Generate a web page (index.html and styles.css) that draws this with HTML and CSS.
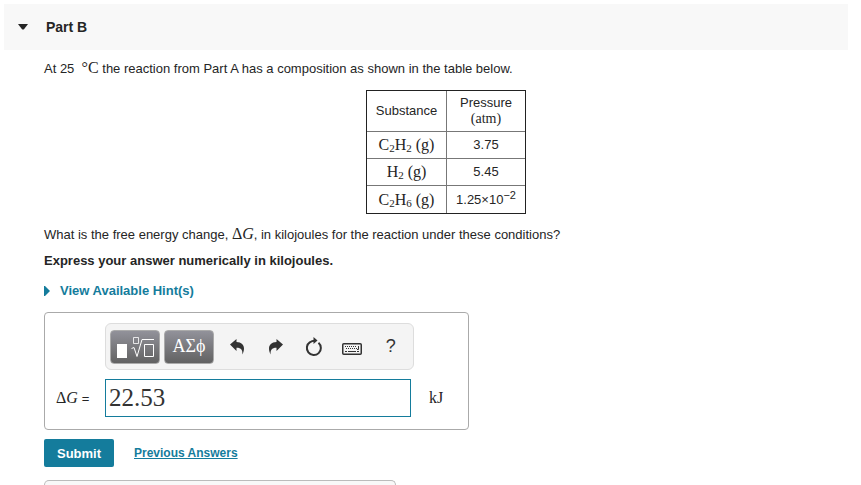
FILE: index.html
```html
<!doctype html>
<html lang="en">
<head>
    <meta charset="UTF-8">
    <meta name="viewport" content="width=device-width, initial-scale=1.0">
    <title>Part B</title>
    <link rel="stylesheet" href="styles.css">
</head>
<body>
<main class="page">
    <header class="part-header">
        <button class="toggle" type="button" aria-label="Collapse Part B">
            <svg width="10" height="6" viewBox="0 0 10 6"><path d="M0 0h10L6 5.2Q5 6 4 5.2z" fill="currentColor"/></svg>
        </button>
        <h1>Part B</h1>
    </header>

    <section class="part-body">
        <p class="intro">At 25 &nbsp;<span class="math">°C</span> the reaction from Part A has a composition as shown in the table below.</p>

        <table class="data-table">
            <thead>
                <tr>
                    <th scope="col">Substance</th>
                    <th scope="col">Pressure<br><span class="unit">(atm)</span></th>
                </tr>
            </thead>
            <tbody>
                <tr>
                    <td class="math">C<sub>2</sub>H<sub>2</sub> (g)</td>
                    <td>3.75</td>
                </tr>
                <tr>
                    <td class="math">H<sub>2</sub> (g)</td>
                    <td>5.45</td>
                </tr>
                <tr>
                    <td class="math">C<sub>2</sub>H<sub>6</sub> (g)</td>
                    <td class="power">1.25×10<sup>−2</sup></td>
                </tr>
            </tbody>
        </table>

        <p class="question">What is the free energy change, <span class="math">Δ<i>G</i></span>, in kilojoules for the reaction under these conditions?</p>
        <p class="instructions">Express your answer numerically in kilojoules.</p>

        <a class="hints" href="#hints">
            <svg width="6" height="10" viewBox="0 0 6 10"><path d="M0 0h1l5 5-5 5H0z" fill="currentColor"/></svg>
            View Available Hint(s)
        </a>

        <form>
            <div class="answer-box">
                <div class="toolbar">
                    <button class="key" type="button" aria-label="Templates">
                        <svg width="38" height="24" viewBox="0 0 38 24" fill="none" stroke="#fff">
                            <path d="M1 9h10v14H1z" fill="#fff" stroke="none"/>
                            <path d="M17.500 2.500h5v6h-5z" stroke-opacity=".8"/>
                            <path d="M15.500 13.500l2.500-1 3 9 5-17h12"/>
                            <path d="M28.500 9.500h9v12h-9z"/>
                        </svg>
                    </button>
                    <button class="key" type="button">ΑΣϕ</button>
                    <div class="tools">
                        <button class="tool" type="button" aria-label="Undo">
                            <svg width="14" height="16" viewBox="0 0 14 16"><path d="M0 5.500L6.500 0v3c5 0 7.500 3 7.500 6.500 0 2-.6 4-1.600 6 .2-4.500-.9-6.800-5.900-6.800V12z" fill="currentColor"/></svg>
                        </button>
                        <button class="tool" type="button" aria-label="Redo">
                            <svg width="14" height="16" viewBox="0 0 14 16"><path d="M14 5.500L7.500 0v3C2.500 3 0 6 0 9.500c0 2 .6 4 1.600 6C1.400 11 2.500 8.700 7.500 8.700V12z" fill="currentColor"/></svg>
                        </button>
                        <button class="tool" type="button" aria-label="Reset">
                            <svg width="18" height="20" viewBox="0 0 18 20"><path d="M13.500 5.800A7 7 0 1 1 5 5.200Q7 3.700 9.500 3.700" fill="none" stroke="currentColor" stroke-width="2"/><path d="M8.500 0l4 3.500-4 3.500z" fill="currentColor"/></svg>
                        </button>
                        <button class="tool" type="button" aria-label="Keyboard">
                            <svg class="keyboard" width="20" height="12" viewBox="0 0 20 12" fill="none" stroke="currentColor">
                                <rect x=".75" y=".75" width="18.500" height="10.500" rx="1" stroke-width="1.500"/>
                                <path d="M3 3.500h12M4 5.500h11" stroke-dasharray="1 1"/>
                                <path d="M3 8.500h2M6 8.500h8M15 8.500h2M16.500 3v3.500H15"/>
                            </svg>
                        </button>
                        <button class="tool help" type="button" aria-label="Help">?</button>
                    </div>
                </div>
                <label class="math" for="answer">Δ<i>G</i> <span class="equals">=</span></label>
                <input id="answer" class="answer" type="text" value="22.53">
                <span class="math">kJ</span>
            </div>
            <div class="actions">
                <button class="submit" type="submit">Submit</button>
                <a class="previous" href="#previous">Previous Answers</a>
            </div>
        </form>

        <div class="feedback"></div>
    </section>
</main>
</body>
</html>
```

FILE: styles.css
```css
body {
    margin: 0;
    background: #fff;
    color: #252525;
    font-family: "Liberation Sans", Arial, sans-serif;
    font-size: 13px;
    line-height: 16px;
}

.page {
    display: flex;
    flex-direction: column;
    box-sizing: border-box;
    min-height: 100vh;
    padding: 4px 13px 0 4px;
}

button {
    padding: 0;
    border: none;
    background: none;
    color: inherit;
    font-family: inherit;
    cursor: pointer;
}

button svg {
    display: block;
}

/* Part header */
.part-header {
    display: flex;
    align-items: center;
    gap: 18px;
    height: 46px;
    padding-left: 14px;
    background: #f8f8f8;
}

h1 {
    margin: 0;
    font-size: 14px;
}

.part-body {
    display: flex;
    flex: 1;
    flex-direction: column;
    padding: 8px 0 0 40px;
}

p {
    margin: 0;
}

.intro,
.question {
    line-height: 20px;
}

.math,
.unit {
    font-family: "Liberation Serif", "Times New Roman", serif;
    font-size: 16px;
}

.unit {
    font-size: 14px;
}

sub,
sup {
    font-size: 11px;
    line-height: 0;
}

sub {
    vertical-align: -2px;
}

sup {
    vertical-align: 5px;
}

/* Pressure table */
.data-table {
    width: 160px;
    margin: 11px auto 10px;
    border: 1px solid #222;
    border-spacing: 0;
    table-layout: fixed;
    text-align: center;
}

.data-table th,
.data-table td {
    padding: 5px 0;
    font-weight: normal;
}

.data-table th {
    padding: 4px 0;
}

.data-table td {
    border-top: 1px solid #777;
}

.data-table th + th,
.data-table td + td {
    border-left: 1px solid #777;
}

.data-table .power {
    padding: 6px 0 5px;
}

.instructions {
    margin-top: 8px;
    font-weight: bold;
}

.hints {
    display: flex;
    align-items: center;
    gap: 10px;
    width: max-content;
    margin: 14px 0 13px;
    color: #147c9c;
    font-weight: bold;
    text-decoration: none;
}

/* Answer entry */
.answer-box {
    display: grid;
    grid-template-columns: 49px 306px 1fr;
    align-items: center;
    row-gap: 9px;
    box-sizing: border-box;
    max-width: 425px;
    padding: 10px 12px 12px 11px;
    border: 1px solid #aaa;
    border-radius: 4px;
}

.toolbar {
    grid-column: 2;
    display: flex;
    align-items: center;
    box-sizing: border-box;
    width: 309px;
    height: 47px;
    padding: 0 3px 0 4px;
    border: 1px solid #ddd;
    border-radius: 6px;
    background: #f4f4f4;
    color: #333;
}

.key {
    display: flex;
    justify-content: center;
    align-items: center;
    width: 50px;
    height: 34px;
    margin-right: 4px;
    border: 1px solid #aaa;
    border-radius: 4px;
    background: linear-gradient(#92929a, #626262);
    color: #fff;
    font-family: "Liberation Serif", "Times New Roman", serif;
    font-size: 18px;
}

.tools {
    display: flex;
    flex: 1;
}

.tool {
    display: flex;
    flex: 1;
    justify-content: center;
    align-items: center;
    height: 34px;
}

.keyboard {
    margin-top: 4px;
}

.help {
    font-size: 18px;
}

label {
    grid-column: 1;
}

.equals {
    font-family: "Liberation Sans", Arial, sans-serif;
    font-size: 13px;
}

.answer {
    box-sizing: border-box;
    width: 100%;
    height: 38px;
    padding: 0 3px;
    border: 1px solid #147c9c;
    color: #333;
    font-family: "Liberation Serif", "Times New Roman", serif;
    font-size: 25px;
}

.answer-box > span {
    padding-left: 18px;
}

.actions {
    display: flex;
    align-items: center;
    gap: 20px;
    margin: 9px 0 13px;
}

.submit {
    width: 70px;
    height: 28px;
    border-radius: 2px;
    background: #147c9c;
    color: #fff;
    font-size: 13px;
    font-weight: bold;
}

.previous {
    color: #147c9c;
    font-size: 12px;
    font-weight: bold;
}

/* Feedback panel */
.feedback {
    flex: 1;
    box-sizing: border-box;
    width: 100%;
    max-width: 352px;
    border: 1px solid #bbb;
    border-bottom: none;
    border-radius: 6px 6px 0 0;
    background: #f8f8f8;
}
```
